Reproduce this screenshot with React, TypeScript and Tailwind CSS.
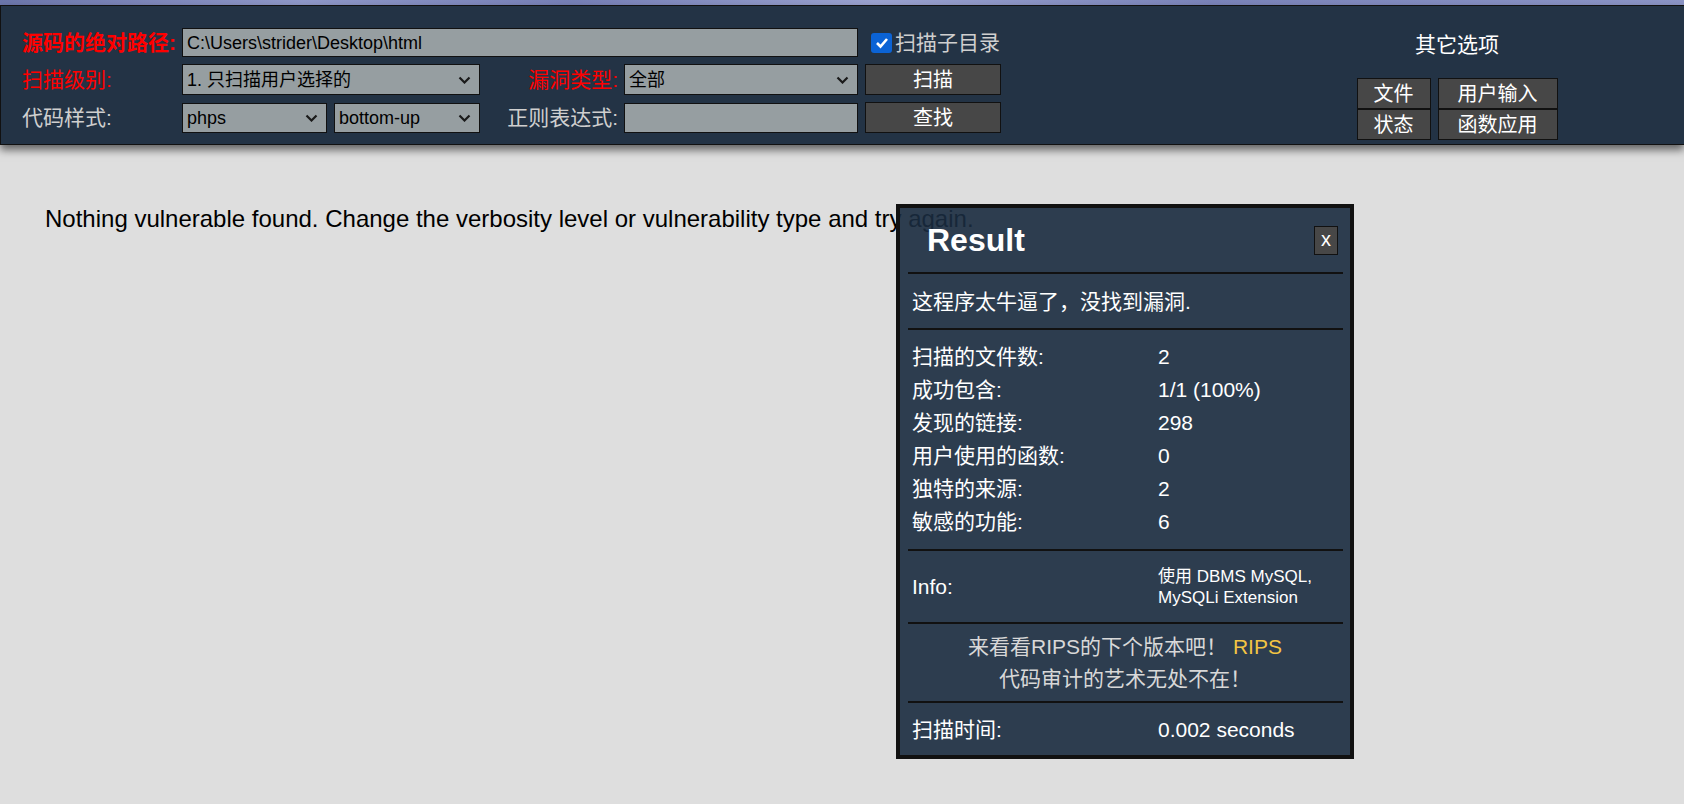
import React from "react";

const FakeSelect = ({ value, className }: { value: string; className: string }) => (
  <div
    className={`flex items-center justify-between border border-[#111] bg-[#969ea1] pl-[4px] pr-[8px] text-[18px] leading-none text-black ${className}`}
  >
    <span>{value}</span>
    <svg width="13" height="8" viewBox="0 0 13 8">
      <polyline points="1.5,1.5 6.5,6.5 11.5,1.5" fill="none" stroke="#1a1a1a" strokeWidth="2.2" />
    </svg>
  </div>
);

const DarkButton = ({ label, className }: { label: string; className: string }) => (
  <button
    className={`flex items-center justify-center border border-[#111] bg-[#474747] text-[20px] leading-none text-white ${className}`}
  >
    {label}
  </button>
);

const Divider = () => <div className="ml-[8px] mr-[7px] h-[2px] bg-[#111]" />;

const stats = [
  ["扫描的文件数:", "2"],
  ["成功包含:", "1/1 (100%)"],
  ["发现的链接:", "298"],
  ["用户使用的函数:", "0"],
  ["独特的来源:", "2"],
  ["敏感的功能:", "6"],
];

export default function App() {
  return (
    <div className="relative min-h-screen bg-[#dedede] font-['Liberation_Sans','Noto_Sans_CJK_SC',sans-serif]">
      {/* top strip */}
      <div className="h-[5px] bg-[linear-gradient(100deg,#6c76ab_0%,#8f98c8_18%,#7680b6_34%,#9aa2cf_52%,#7a84b9_72%,#8c95c6_100%)]" />

      <header className="relative z-10 border-y border-l border-[#111] bg-[#233345] shadow-[0_5px_8px_rgba(0,0,0,0.55)]">
        <div className="grid grid-cols-[1fr_300px] pr-[77px]">
          {/* scan form */}
          <div className="grid grid-cols-[160px_298px_144px_234px_auto] grid-rows-[29px_31px_31px] items-center gap-y-[7px] pb-[11px] pl-[21px] pt-[22px] text-[21px] leading-none">
            <div className="font-bold text-[#ff0000]">源码的绝对路径:</div>
            <div className="col-span-3 flex h-[29px] items-center border border-[#111] bg-[#969ea1] pl-[4px] text-[18px] text-black">
              C:\Users\strider\Desktop\html
            </div>
            <label className="ml-[13px] flex items-center gap-[3px] text-[#cfcfcf]">
              <span className="flex h-[20px] w-[21px] items-center justify-center rounded-[3px] bg-[#0b63d5]">
                <svg width="14" height="12" viewBox="0 0 14 12">
                  <polyline points="2,6 5.5,9.5 12,2" fill="none" stroke="white" strokeWidth="2.6" />
                </svg>
              </span>
              扫描子目录
            </label>

            <div className="text-[#ff0000]">扫描级别:</div>
            <FakeSelect value="1. 只扫描用户选择的" className="h-[31px]" />
            <div className="pr-[6px] text-right text-[#ff0000]">漏洞类型:</div>
            <FakeSelect value="全部" className="h-[31px]" />
            <DarkButton label="扫描" className="ml-[7px] h-[31px] w-[136px]" />

            <div className="text-[#cfcfcf]">代码样式:</div>
            <div className="flex gap-[7px]">
              <FakeSelect value="phps" className="h-[30px] w-[145px]" />
              <FakeSelect value="bottom-up" className="h-[30px] w-[146px]" />
            </div>
            <div className="pr-[6px] text-right text-[#cfcfcf]">正则表达式:</div>
            <div className="h-[30px] border border-[#111] bg-[#969ea1]" />
            <DarkButton label="查找" className="ml-[7px] h-[31px] w-[136px]" />
          </div>

          {/* other options */}
          <div className="flex flex-col items-center pt-[25px]">
            <div className="text-[21px] leading-[28px] text-white">其它选项</div>
            <div className="mt-[19px] grid grid-cols-[74px_120px] gap-x-[7px]">
              <DarkButton label="文件" className="h-[31px]" />
              <DarkButton label="用户输入" className="h-[31px]" />
              <DarkButton label="状态" className="h-[31px]" />
              <DarkButton label="函数应用" className="h-[31px]" />
            </div>
          </div>
        </div>
      </header>

      <main className="pl-[45px] pt-[60px] text-[24px] leading-[28px] text-black">
        Nothing vulnerable found. Change the verbosity level or vulnerability type and try again.
      </main>

      {/* result window */}
      <div className="absolute left-[896px] top-[204px] z-20 w-[458px] border-4 border-[#111] bg-[#1a2b3f]/90 text-[21px] text-white">
        <div className="flex h-[64px] items-center justify-between pl-[27px] pr-[12px]">
          <h2 className="text-[32px] font-bold leading-none">Result</h2>
          <button className="flex h-[29px] w-[24px] items-center justify-center border border-[#111] bg-[#474747] pb-[2px] text-[20px] leading-none text-white">
            x
          </button>
        </div>
        <Divider />
        <div className="flex h-[54px] items-center pl-[12px] leading-none">这程序太牛逼了，没找到漏洞.</div>
        <Divider />
        <div className="pb-[11px] pl-[12px] pt-[10px]">
          {stats.map(([label, value]) => (
            <div key={label} className="grid h-[33px] grid-cols-[246px_1fr] items-center leading-none">
              <span>{label}</span>
              <span>{value}</span>
            </div>
          ))}
        </div>
        <Divider />
        <div className="grid h-[71px] grid-cols-[246px_1fr] items-center pl-[12px]">
          <span className="leading-none">Info:</span>
          <span className="text-[17px] leading-[21px]">
            使用 DBMS MySQL,
            <br />
            MySQLi Extension
          </span>
        </div>
        <Divider />
        <div className="flex h-[77px] flex-col items-center justify-center text-[21px] leading-[32px] text-[#d8d8d8]">
          <div>
            来看看RIPS的下个版本吧！ <span className="text-[#f3c543]">RIPS</span>
          </div>
          <div>代码审计的艺术无处不在！</div>
        </div>
        <Divider />
        <div className="grid h-[52px] grid-cols-[246px_1fr] items-center pl-[12px] leading-none">
          <span>扫描时间:</span>
          <span>0.002 seconds</span>
        </div>
      </div>
    </div>
  );
}
